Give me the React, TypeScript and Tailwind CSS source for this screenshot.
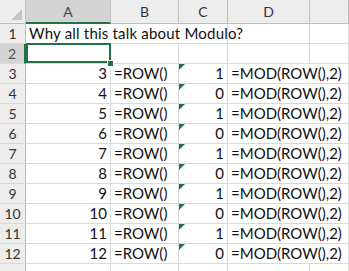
import React from 'react';

const FONT = { fontFamily: 'Lato, "Liberation Sans", sans-serif' };

const ROWS = [3, 4, 5, 6, 7, 8, 9, 10, 11, 12];

function Flag() {
    return (
        <svg className="absolute left-0 top-0" width="6" height="6" viewBox="0 0 6 6">
            <polygon points="0,0 6,0 0,6" fill="#217346" />
        </svg>
    );
}

function RowHead({ n, selected = false }: { n?: number; selected?: boolean }) {
    return (
        <div className={`flex items-center justify-center text-[14px] border-b border-[#d8d8d8] ${selected ? 'bg-[#d3d3d3] text-[#555] border-r-2 border-r-[#217346]' : 'bg-[#ededed] text-[#333] border-r border-r-[#bdbdbd]'}`}>
            {n}
        </div>
    );
}

const cell = 'relative border-r border-b border-[#d9d9d9] flex items-center text-[15px] text-[#111] whitespace-nowrap';

export default function App() {
    return (
        <div className="w-[349px] h-[271px] overflow-hidden bg-white" style={FONT}>
            <div className="grid grid-cols-[26px_85px_68px_49px_82px_1fr] grid-rows-[24px_repeat(13,20px)]">
                {/* header */}
                <div className="relative bg-[#ededed] border-r border-b border-[#bdbdbd]">
                    <svg className="absolute right-[3px] bottom-[3px]" width="11" height="11" viewBox="0 0 11 11">
                        <polygon points="11,0 11,11 0,11" fill="#c4c4c4" />
                    </svg>
                </div>
                <div className="flex items-center justify-center bg-[#d3d3d3] text-[14px] text-[#444] border-r border-r-[#bdbdbd] border-b-2 border-b-[#217346]">A</div>
                {['B', 'C', 'D', ''].map((h, i) => (
                    <div key={i} className="flex items-center justify-center bg-[#ededed] text-[14px] text-[#333] border-r border-b border-[#bdbdbd]">{h}</div>
                ))}

                {/* row 1 */}
                <RowHead n={1} />
                <div className={`${cell} col-span-3 pl-[3px] tracking-[0.2px]`}>Why all this talk about Modulo?</div>
                <div className={cell} />
                <div className={cell} />

                {/* row 2 */}
                <RowHead n={2} selected />
                <div className={cell}>
                    <div className="absolute -top-px left-0 -right-px bottom-0 border-2 border-[#217346] z-10" />
                    <div className="absolute -right-[4px] -bottom-[4px] w-[7px] h-[7px] bg-[#217346] border border-white z-20" />
                </div>
                <div className={cell} />
                <div className={cell} />
                <div className={cell} />
                <div className={cell} />

                {ROWS.map(r => (
                    <React.Fragment key={r}>
                        <RowHead n={r} />
                        <div className={`${cell} justify-end pr-[3px]`}>{r}</div>
                        <div className={`${cell} pl-[3px]`}>=ROW()</div>
                        <div className={`${cell} justify-end pr-[3px]`}>
                            <Flag />
                            {r % 2}
                        </div>
                        <div className={`${cell} col-span-2 pl-[3px]`}>=MOD(ROW(),2)</div>
                    </React.Fragment>
                ))}

                {/* row 13, only its top edge shows */}
                <RowHead />
                <div className={cell} />
                <div className={cell} />
                <div className={cell} />
                <div className={cell} />
                <div className={cell} />
            </div>
        </div>
    );
}
